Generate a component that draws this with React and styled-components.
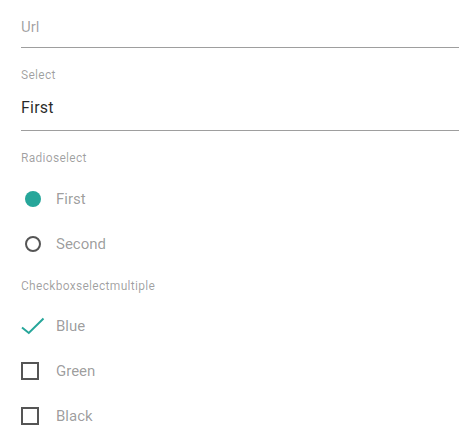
import React from "react";
import styled, { createGlobalStyle } from "styled-components";

const GlobalStyle = createGlobalStyle`
  body {
    margin: 0;
    background: #fff;
    font-family: Roboto, "Liberation Sans", sans-serif;
  }
`;

const Form = styled.div`
  padding-left: 21px;
  width: 459px;
  box-sizing: border-box;
`;

const UrlField = styled.div`
  height: 48px;
  box-sizing: border-box;
  padding-top: 17px;
  border-bottom: 1px solid #9e9e9e;
  font-size: 15px;
  line-height: 20px;
  color: rgba(0, 0, 0, 0.38);
`;

const SelectField = styled.div`
  padding: 19px 0 10px;
  border-bottom: 1px solid #9e9e9e;
`;

const Label = styled.div`
  font-size: 12px;
  line-height: 16px;
  letter-spacing: 0.3px;
  color: rgba(0, 0, 0, 0.38);
  margin-top: ${(p) => p.$top || 0}px;
  margin-bottom: ${(p) => p.$bottom || 0}px;
`;

const Value = styled.div`
  margin-top: 13px;
  font-size: 16px;
  line-height: 24px;
  letter-spacing: 0.2px;
  color: rgba(0, 0, 0, 0.85);
`;

const Option = styled.div`
  display: flex;
  align-items: center;
  height: 45px;
`;

const IconSlot = styled.div`
  width: 35px;
  display: flex;
  align-items: center;
  flex-shrink: 0;
`;

const OptionText = styled.span`
  font-size: 15px;
  color: rgba(0, 0, 0, 0.4);
`;

const RadioCircle = styled.span`
  width: 16px;
  height: 16px;
  margin-left: 4px;
  border-radius: 50%;
  box-sizing: border-box;
  background: ${(p) => (p.$checked ? "#26a69a" : "transparent")};
  border: ${(p) => (p.$checked ? "none" : "2px solid #555")};
`;

const Box = styled.span`
  width: 18px;
  height: 18px;
  box-sizing: border-box;
  border: 2px solid #555;
`;

const Radio = ({ label, checked }) => (
  <Option>
    <IconSlot>
      <RadioCircle $checked={checked} />
    </IconSlot>
    <OptionText>{label}</OptionText>
  </Option>
);

const Checkbox = ({ label, checked }) => (
  <Option>
    <IconSlot>
      {checked ? (
        <svg width="24" height="18" viewBox="0 0 24 18">
          <path d="M1 10.5 L7.8 16 L22.5 1.5" fill="none" stroke="#26a69a" strokeWidth="2" />
        </svg>
      ) : (
        <Box />
      )}
    </IconSlot>
    <OptionText>{label}</OptionText>
  </Option>
);

const App = () => {
  return (
    <>
      <GlobalStyle />
      <Form>
        <UrlField>Url</UrlField>
        <SelectField>
          <Label>Select</Label>
          <Value>First</Value>
        </SelectField>
        <Label $top={19} $bottom={10}>Radioselect</Label>
        <Radio label="First" checked />
        <Radio label="Second" />
        <Label $top={12} $bottom={9}>Checkboxselectmultiple</Label>
        <Checkbox label="Blue" checked />
        <Checkbox label="Green" />
        <Checkbox label="Black" />
      </Form>
    </>
  );
};

export default App;
